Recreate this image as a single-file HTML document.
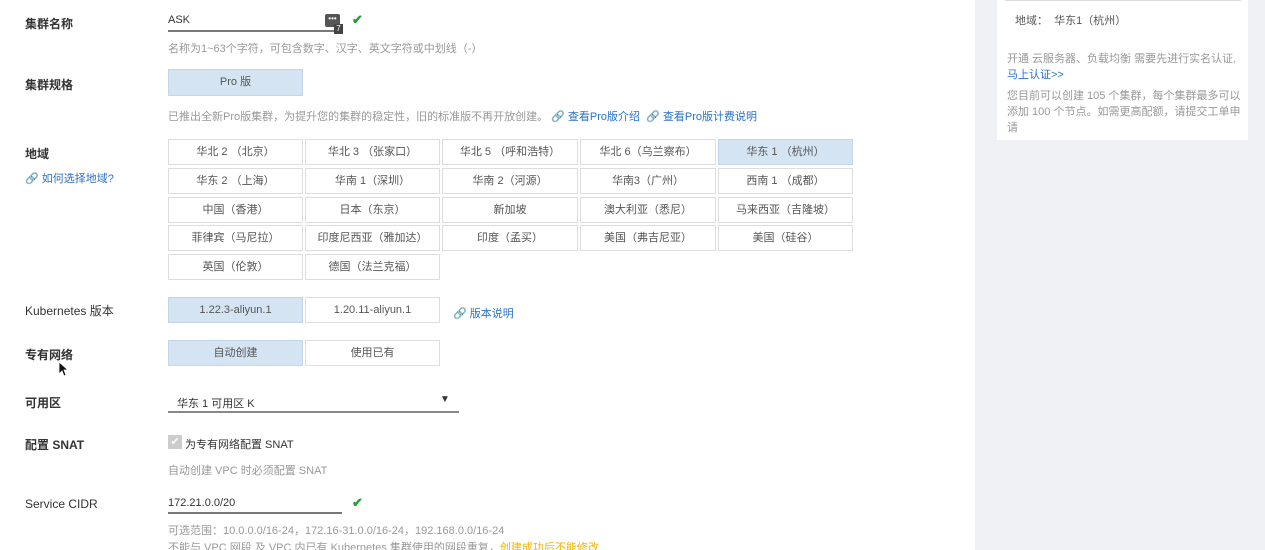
<!DOCTYPE html>
<html><head><meta charset="utf-8"><style>
*{margin:0;padding:0;box-sizing:border-box}
html,body{width:1265px;height:550px;overflow:hidden}
body{background:#fff;font-family:"Liberation Sans","Noto Sans CJK SC",sans-serif;position:relative;color:#333}
.a{position:absolute;white-space:nowrap}
.lbl{font-size:12px;color:#333;font-weight:bold}
.hint{font-size:11px;color:#999}
.lk{color:#2a72c6;font-size:11px}
.btn{position:absolute;height:26px;border:1px solid #ddd;background:#fff;font-size:11px;color:#555;text-align:center;line-height:24px}
.sel{background:#d5e4f2;border-color:#c4d7ea}
.side{position:absolute;left:975px;top:0;width:290px;height:550px;background:#f0f1f4}
.card{position:absolute;left:997px;top:0;width:251px;height:140px;background:#fff}
.chk{color:#2a9a3a;font-size:13px;font-weight:bold}
</style></head><body>
<div class="side"></div>
<div class="card">
 <div style="position:absolute;left:8px;top:0;width:236px;height:1px;background:#ddd"></div>
 <div class="a" style="left:18px;top:12px;font-size:11px;color:#555">地域：&nbsp; 华东1（杭州）</div>
 <div class="a" style="left:10px;top:50px;font-size:11px;color:#999">开通 云服务器、负载均衡 需要先进行实名认证,</div>
 <div class="a lk" style="left:10px;top:66px">马上认证&gt;&gt;</div>
 <div style="position:absolute;left:10px;top:88px;width:235px;font-size:11px;color:#999;line-height:16px">您目前可以创建 105 个集群，每个集群最多可以添加 100 个节点。如需更高配额，请提交工单申请</div>
</div>

<div class="a lbl" style="left:25px;top:15px">集群名称</div>
<div class="a" style="left:168px;top:14px;font-size:11px">ASK</div>
<div style="position:absolute;left:168px;top:30px;width:172px;height:2px;background:#777"></div>
<div style="position:absolute;left:325px;top:14px;width:15px;height:13px;background:#555;border-radius:2px;color:#fff;font-size:8px;text-align:center;line-height:9px">•••</div>
<div style="position:absolute;left:334px;top:24px;width:9px;height:10px;background:#444;color:#fff;font-size:8px;text-align:center;line-height:10px">7</div>
<div class="a chk" style="left:352px;top:12px">✔</div>
<div class="a hint" style="left:168px;top:40px">名称为1~63个字符，可包含数字、汉字、英文字符或中划线（-）</div>

<div class="a lbl" style="left:25px;top:76px">集群规格</div>
<div class="btn sel" style="left:168px;top:69px;width:135px;height:27px;line-height:25px">Pro 版</div>
<div class="a hint" style="left:168px;top:108px">已推出全新Pro版集群，为提升您的集群的稳定性，旧的标准版不再开放创建。 <span class="lk">🔗 查看Pro版介绍</span> &nbsp;<span class="lk">🔗 查看Pro版计费说明</span></div>

<div class="a lbl" style="left:25px;top:145px">地域</div>
<div class="a lk" style="left:25px;top:170px">🔗 如何选择地域?</div>

<div class="btn" style="left:168px;top:139px;width:135px">华北 2 （北京）</div>
<div class="btn" style="left:305px;top:139px;width:135px">华北 3 （张家口）</div>
<div class="btn" style="left:442px;top:139px;width:136px">华北 5 （呼和浩特）</div>
<div class="btn" style="left:580px;top:139px;width:136px">华北 6（乌兰察布）</div>
<div class="btn sel" style="left:718px;top:139px;width:135px">华东 1 （杭州）</div>

<div class="btn" style="left:168px;top:168px;width:135px">华东 2 （上海）</div>
<div class="btn" style="left:305px;top:168px;width:135px">华南 1（深圳）</div>
<div class="btn" style="left:442px;top:168px;width:136px">华南 2（河源）</div>
<div class="btn" style="left:580px;top:168px;width:136px">华南3（广州）</div>
<div class="btn" style="left:718px;top:168px;width:135px">西南 1 （成都）</div>

<div class="btn" style="left:168px;top:197px;width:135px">中国（香港）</div>
<div class="btn" style="left:305px;top:197px;width:135px">日本（东京）</div>
<div class="btn" style="left:442px;top:197px;width:136px">新加坡</div>
<div class="btn" style="left:580px;top:197px;width:136px">澳大利亚（悉尼）</div>
<div class="btn" style="left:718px;top:197px;width:135px">马来西亚（吉隆坡）</div>

<div class="btn" style="left:168px;top:225px;width:135px">菲律宾（马尼拉）</div>
<div class="btn" style="left:305px;top:225px;width:135px">印度尼西亚（雅加达）</div>
<div class="btn" style="left:442px;top:225px;width:136px">印度（孟买）</div>
<div class="btn" style="left:580px;top:225px;width:136px">美国（弗吉尼亚）</div>
<div class="btn" style="left:718px;top:225px;width:135px">美国（硅谷）</div>

<div class="btn" style="left:168px;top:254px;width:135px">英国（伦敦）</div>
<div class="btn" style="left:305px;top:254px;width:135px">德国（法兰克福）</div>

<div class="a" style="left:25px;top:302px;font-size:12px;color:#333">Kubernetes 版本</div>
<div class="btn sel" style="left:168px;top:297px;width:135px">1.22.3-aliyun.1</div>
<div class="btn" style="left:305px;top:297px;width:135px">1.20.11-aliyun.1</div>
<div class="a lk" style="left:453px;top:305px">🔗 版本说明</div>

<div class="a lbl" style="left:25px;top:346px">专有网络</div>
<div class="btn sel" style="left:168px;top:340px;width:135px">自动创建</div>
<div class="btn" style="left:305px;top:340px;width:135px">使用已有</div>
<svg class="a" style="left:58px;top:361px" width="10" height="16" viewBox="0 0 10 16"><path d="M1 1 L1 13 L4 10 L6 15 L8 14 L6 9 L10 9 Z" fill="#111" stroke="#fff" stroke-width="0.8"/></svg>

<div class="a lbl" style="left:25px;top:394px">可用区</div>
<div class="a" style="left:177px;top:395px;font-size:11px">华东 1 可用区 K</div>
<div class="a" style="left:440px;top:394px;font-size:10px;color:#333">▼</div>
<div style="position:absolute;left:168px;top:411px;width:291px;height:2px;background:#888"></div>

<div class="a lbl" style="left:25px;top:436px">配置 SNAT</div>
<div style="position:absolute;left:168px;top:435px;width:14px;height:14px;background:#ccc;color:#fff;font-size:11px;text-align:center;line-height:14px">✔</div>
<div class="a" style="left:185px;top:436px;font-size:11px">为专有网络配置 SNAT</div>
<div class="a hint" style="left:168px;top:462px">自动创建 VPC 时必须配置 SNAT</div>

<div class="a" style="left:25px;top:497px;font-size:12px">Service CIDR</div>
<div class="a" style="left:168px;top:497px;font-size:11px">172.21.0.0/20</div>
<div style="position:absolute;left:168px;top:512px;width:174px;height:2px;background:#777"></div>
<div class="a chk" style="left:352px;top:495px">✔</div>
<div class="a hint" style="left:168px;top:522px">可选范围：10.0.0.0/16-24，172.16-31.0.0/16-24，192.168.0.0/16-24</div>
<div class="a hint" style="left:168px;top:539px">不能与 VPC 网段 及 VPC 内已有 Kubernetes 集群使用的网段重复，<span style="color:#f0b400">创建成功后不能修改</span></div>
</body></html>
